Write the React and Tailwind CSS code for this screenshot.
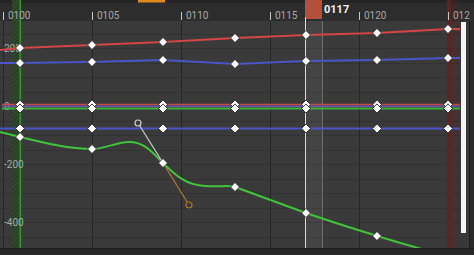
import React from "react";

const KX = [20, 92, 163, 235, 306, 377, 448];
const RED = [48, 45, 42, 38, 35, 33, 29];
const BLUE = [63, 62, 60, 64, 61, 60, 58];
const TICKS = [
  { x: 3, l: "0100" },
  { x: 92, l: "0105" },
  { x: 181, l: "0110" },
  { x: 270, l: "0115" },
  { x: 359, l: "0120" },
  { x: 448, l: "012" },
];

function Key({ x, y }) {
  const s = 4.5;
  return (
    <polygon
      points={`${x},${y - s} ${x + s},${y} ${x},${y + s} ${x - s},${y}`}
      fill="#ffffff"
      stroke="#1a1a1a"
      strokeWidth="0.8"
    />
  );
}

function Zones({ h }) {
  return (
    <>
      <defs>
        <pattern id={`hatch${h}`} width="3" height="3" patternUnits="userSpaceOnUse" patternTransform="rotate(45)">
          <rect width="3" height="3" fill="#2c342b" />
          <rect width="1.5" height="3" fill="#2b5528" />
        </pattern>
      </defs>
      <rect x="12" y="0" width="8" height={h} fill={`url(#hatch${h})`} />
      <rect x="19.5" y="0" width="1.6" height={h} fill="#37932f" />
      <rect x="447" y="0" width="4" height={h} fill="#5e2222" />
      <rect x="451" y="0" width="9" height={h} fill="#5a2020" opacity="0.3" />
    </>
  );
}

function Ruler() {
  return (
    <svg width="474" height="21" className="block">
      <rect width="474" height="21" fill="#2d2d2d" />
      <rect width="474" height="3" fill="#252525" />
      <rect x="138" y="0" width="27" height="2.5" fill="#e08a1e" />
      <Zones h={21} />
      {TICKS.map((t) => (
        <g key={t.x}>
          <line x1={t.x + 0.5} y1="12" x2={t.x + 0.5} y2="20" stroke="#c8c8c8" strokeWidth="1" />
          <text x={t.x + 5} y="19" fill="#a8a8a8" fontSize="10" fontFamily="Roboto, 'Liberation Sans', sans-serif">
            {t.l}
          </text>
        </g>
      ))}
      <rect x="305" y="0" width="17" height="19" fill="#b4503a" />
      <line x1="305.5" y1="17" x2="305.5" y2="21" stroke="#e0e0e0" strokeWidth="1" />
      <text x="324" y="13" fill="#f2f2f2" fontSize="11" fontWeight="bold" fontFamily="Roboto, 'Liberation Sans', sans-serif">
        0117
      </text>
    </svg>
  );
}

function Graph() {
  const hl = [];
  for (let y = 33.5; y < 248; y += 14.5) hl.push(y);
  return (
    <svg width="460" height="227" className="block">
      <g transform="translate(0,-21)">
        <rect x="0" y="21" width="460" height="227" fill="#3a3a3a" />
        {hl.map((y) => (
          <line key={y} x1="0" y1={Math.round(y) + 0.5} x2="460" y2={Math.round(y) + 0.5} stroke="#323232" strokeWidth="1" />
        ))}
        {[3, 92, 181, 270, 359].map((x) => (
          <line key={x} x1={x + 0.5} y1="21" x2={x + 0.5} y2="248" stroke="#262626" strokeWidth="1" />
        ))}
        <rect x="306" y="21" width="16" height="227" fill="#ffffff" opacity="0.05" />
        <line x1="322.5" y1="21" x2="322.5" y2="248" stroke="#6c6c6c" strokeWidth="1" />
        <g transform="translate(0,21)">
          <Zones h={227} />
        </g>
        <line x1="305.5" y1="21" x2="305.5" y2="248" stroke="#d8d8d8" strokeWidth="1" />

        <g fill="#a8a8a8" fontSize="10" fontFamily="Roboto, 'Liberation Sans', sans-serif">
          <text x="4" y="52">200</text>
          <text x="4" y="110">0</text>
          <text x="4" y="168">-200</text>
          <text x="4" y="226">-400</text>
        </g>

        <polyline
          points={`0,50 ${KX.map((x, i) => `${x},${RED[i]}`).join(" ")} 460,29`}
          fill="none"
          stroke="#d24646"
          strokeWidth="2"
        />
        <polyline
          points={`0,63 ${KX.map((x, i) => `${x},${BLUE[i]}`).join(" ")} 460,58`}
          fill="none"
          stroke="#4a55c8"
          strokeWidth="2"
        />
        <line x1="2" y1="104.5" x2="460" y2="104.5" stroke="#c84848" strokeWidth="1.6" />
        <line x1="2" y1="106.3" x2="460" y2="106.3" stroke="#6a55b0" strokeWidth="1.4" />
        <line x1="2" y1="108.5" x2="460" y2="108.5" stroke="#3cb33c" strokeWidth="2" />
        <line x1="0" y1="128.5" x2="460" y2="128.5" stroke="#4a55c8" strokeWidth="2" />

        <path
          d="M0,132 L20,137 C45,143 70,149 92,149 C106,149 118,141 131,142 C145,143 152,152 163,163 C175,175 186,185 205,186 C221,187 228,185 235,187 L306,213 C335,223 358,230 377,236 C400,243 418,248 432,252"
          fill="none"
          stroke="#3fc43a"
          strokeWidth="2"
        />

        <line x1="163" y1="163" x2="138" y2="123" stroke="#c8c8c8" strokeWidth="1.2" />
        <line x1="163" y1="163" x2="189" y2="205" stroke="#b07a30" strokeWidth="1.2" />
        <circle cx="138" cy="123" r="3" fill="#3a3a3a" stroke="#cfcfcf" strokeWidth="1.2" />
        <circle cx="189" cy="205" r="3" fill="#3a3a3a" stroke="#a8742e" strokeWidth="1.2" />

        {KX.map((x, i) => (
          <Key key={`r${x}`} x={x} y={RED[i]} />
        ))}
        {KX.map((x, i) => (
          <Key key={`b${x}`} x={x} y={BLUE[i]} />
        ))}
        {KX.map((x) => (
          <g key={`s${x}`}>
            <Key x={x} y={104.5} />
            <Key x={x} y={108.5} />
          </g>
        ))}
        {KX.map((x) => (
          <Key key={`l${x}`} x={x} y={128.5} />
        ))}
        {[
          [20, 137],
          [92, 149],
          [163, 163],
          [235, 187],
          [306, 213],
          [377, 236],
        ].map(([x, y]) => (
          <Key key={`g${x}`} x={x} y={y} />
        ))}
      </g>
    </svg>
  );
}

export default function App() {
  return (
    <div
      className="w-[474px] h-[255px] overflow-hidden flex flex-col bg-[#262626]"
      style={{ fontFamily: "Roboto, 'Liberation Sans', sans-serif" }}
    >
      <Ruler />
      <div className="flex h-[227px]">
        <Graph />
        <div className="w-[9px] bg-[#383838] pt-[1px] pl-[1px]">
          <div className="w-[5px] h-[211px] bg-[#f4f4f4]" />
        </div>
        <div className="w-[5px] bg-[#2a2a2a] border-l border-[#1e1e1e]" />
      </div>
      <div className="flex-1 bg-[#272727] border-t border-[#1c1c1c]" />
    </div>
  );
}
